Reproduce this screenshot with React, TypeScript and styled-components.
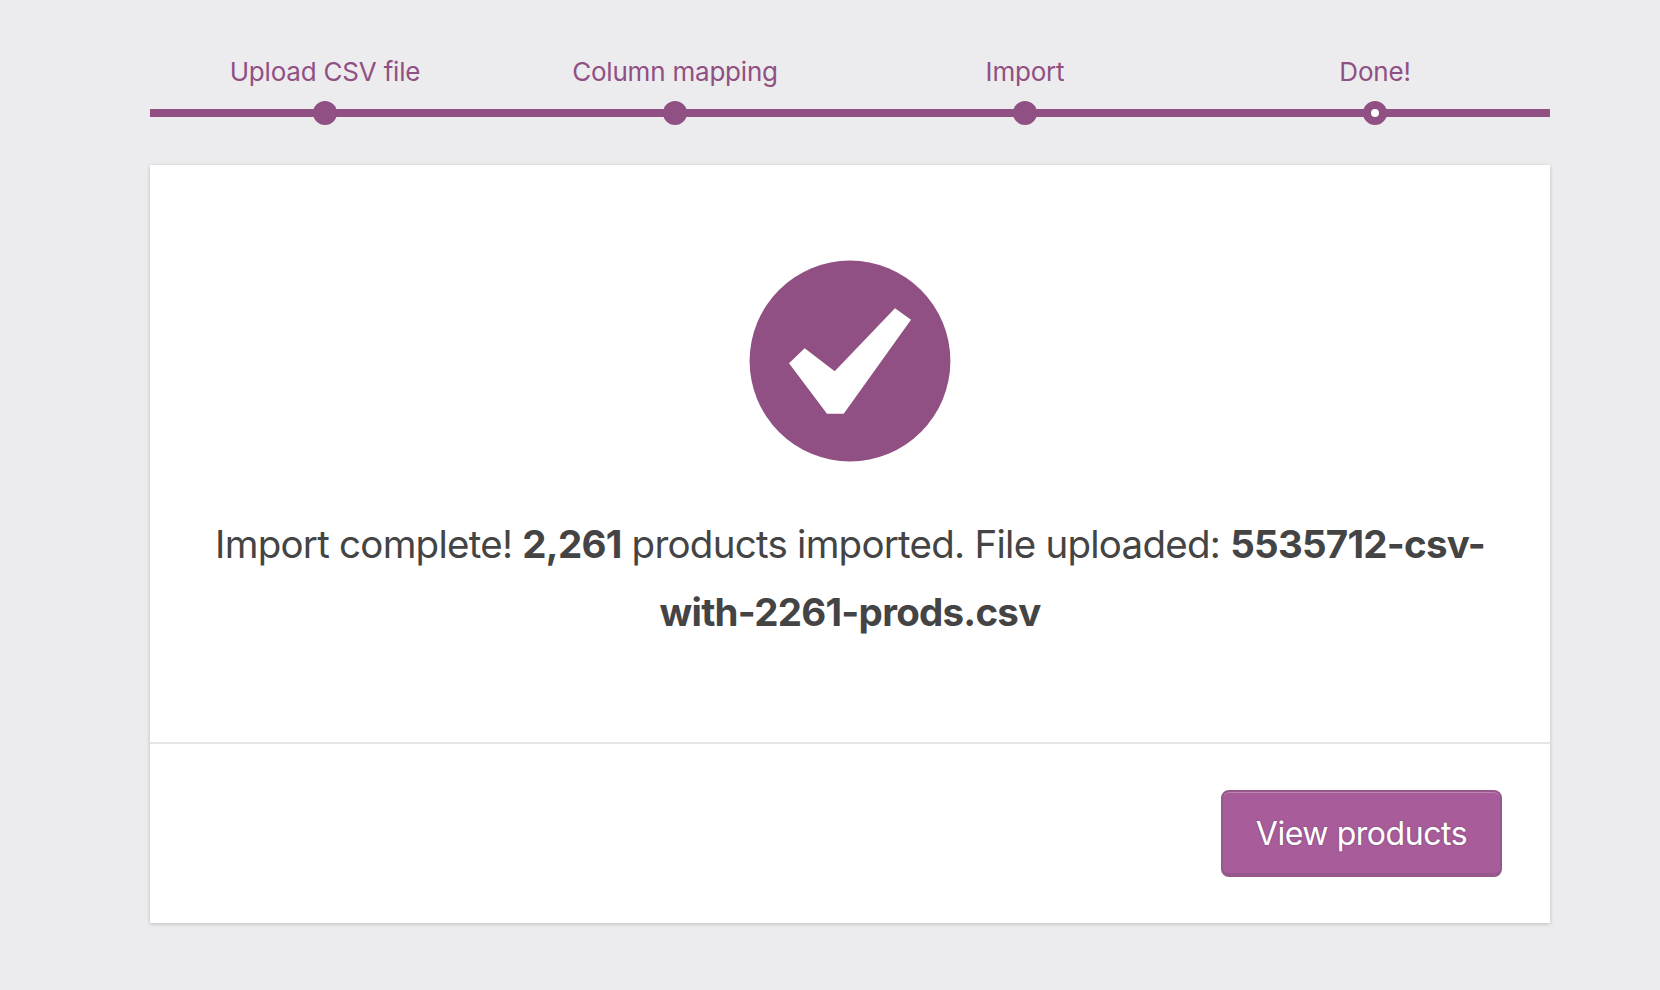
import styled, { createGlobalStyle } from "styled-components"

const purple = "#905083"

const GlobalStyle = createGlobalStyle`
    html, body {
        margin: 0;
        background: #ecebee;
        font-family: Inter, "Liberation Sans", sans-serif;
    }
`

const Page = styled.div`
    box-sizing: border-box;
    width: 1660px;
    height: 990px;
    padding: 53px 110px 0 150px;
    overflow: hidden;
`

const Steps = styled.ol`
    display: flex;
    margin: 0 0 48px;
    padding: 0;
    list-style: none;
`

const Step = styled.li<{ $current?: boolean }>`
    position: relative;
    flex: 1;
    box-sizing: border-box;
    height: 64px;
    padding-top: 1px;
    border-bottom: 8px solid ${purple};
    color: ${purple};
    font-size: 26px;
    letter-spacing: -0.2px;
    line-height: 36px;
    text-align: center;

    &::before {
        content: "";
        position: absolute;
        left: 50%;
        bottom: -16px;
        box-sizing: border-box;
        width: 24px;
        height: 24px;
        margin-left: -12px;
        border-radius: 50%;
        background: ${(p) => (p.$current ? "#fff" : purple)};
        border: ${(p) => (p.$current ? `8px solid ${purple}` : "none")};
    }
`

const Card = styled.div`
    background: #fff;
    box-shadow: 0 1px 4px rgba(0, 0, 0, 0.2);
`

const Done = styled.section`
    display: flex;
    flex-direction: column;
    align-items: center;
    gap: 49px;
    padding: 96px 48px;
    border-bottom: 2px solid #e6e6e8;
`

const Tick = styled.svg`
    display: block;
    width: 200px;
    height: 200px;
    overflow: visible;
`

const Message = styled.p`
    margin: 0;
    color: #444;
    font-size: 38.5px;
    letter-spacing: -0.75px;
    line-height: 68px;
    text-align: center;
`

const Actions = styled.div`
    display: flex;
    justify-content: flex-end;
    padding: 46px 48px;
`

const ViewProducts = styled.a`
    box-sizing: border-box;
    display: flex;
    align-items: center;
    justify-content: center;
    width: 281px;
    height: 87px;
    padding-top: 2px;
    border: 2px solid #96588a;
    border-bottom-width: 4px;
    border-radius: 8px;
    background: #a85c9a;
    box-shadow: inset 0 1px 0 rgba(255, 255, 255, 0.25);
    color: #fff;
    font-size: 32px;
    letter-spacing: -0.45px;
    text-decoration: none;
    text-shadow: 0 -1px 1px #96588a, 1px 0 1px #96588a, 0 1px 1px #96588a, -1px 0 1px #96588a;
`

const steps = ["Upload CSV file", "Column mapping", "Import", "Done!"]

export default function App() {
    return <Page>
        <GlobalStyle />
        <Steps>
            {steps.map((s, i) => <Step key={s} $current={i === steps.length - 1}>{s}</Step>)}
        </Steps>
        <Card>
            <Done>
                <Tick viewBox="0 0 200 200">
                    <circle cx="100" cy="100" r="100.4" fill={purple} />
                    <polygon fill="#fff" points="39,102.3 54.7,87.3 84.7,110.3 145,47.3 161,58.7 93.7,152.7 77,152.7" />
                </Tick>
                <Message>
                    Import complete! <strong>2,261</strong> products imported. File uploaded: <strong>5535712-csv-with-2261-prods.csv</strong>
                </Message>
            </Done>
            <Actions>
                <ViewProducts href="#">View products</ViewProducts>
            </Actions>
        </Card>
    </Page>
}
